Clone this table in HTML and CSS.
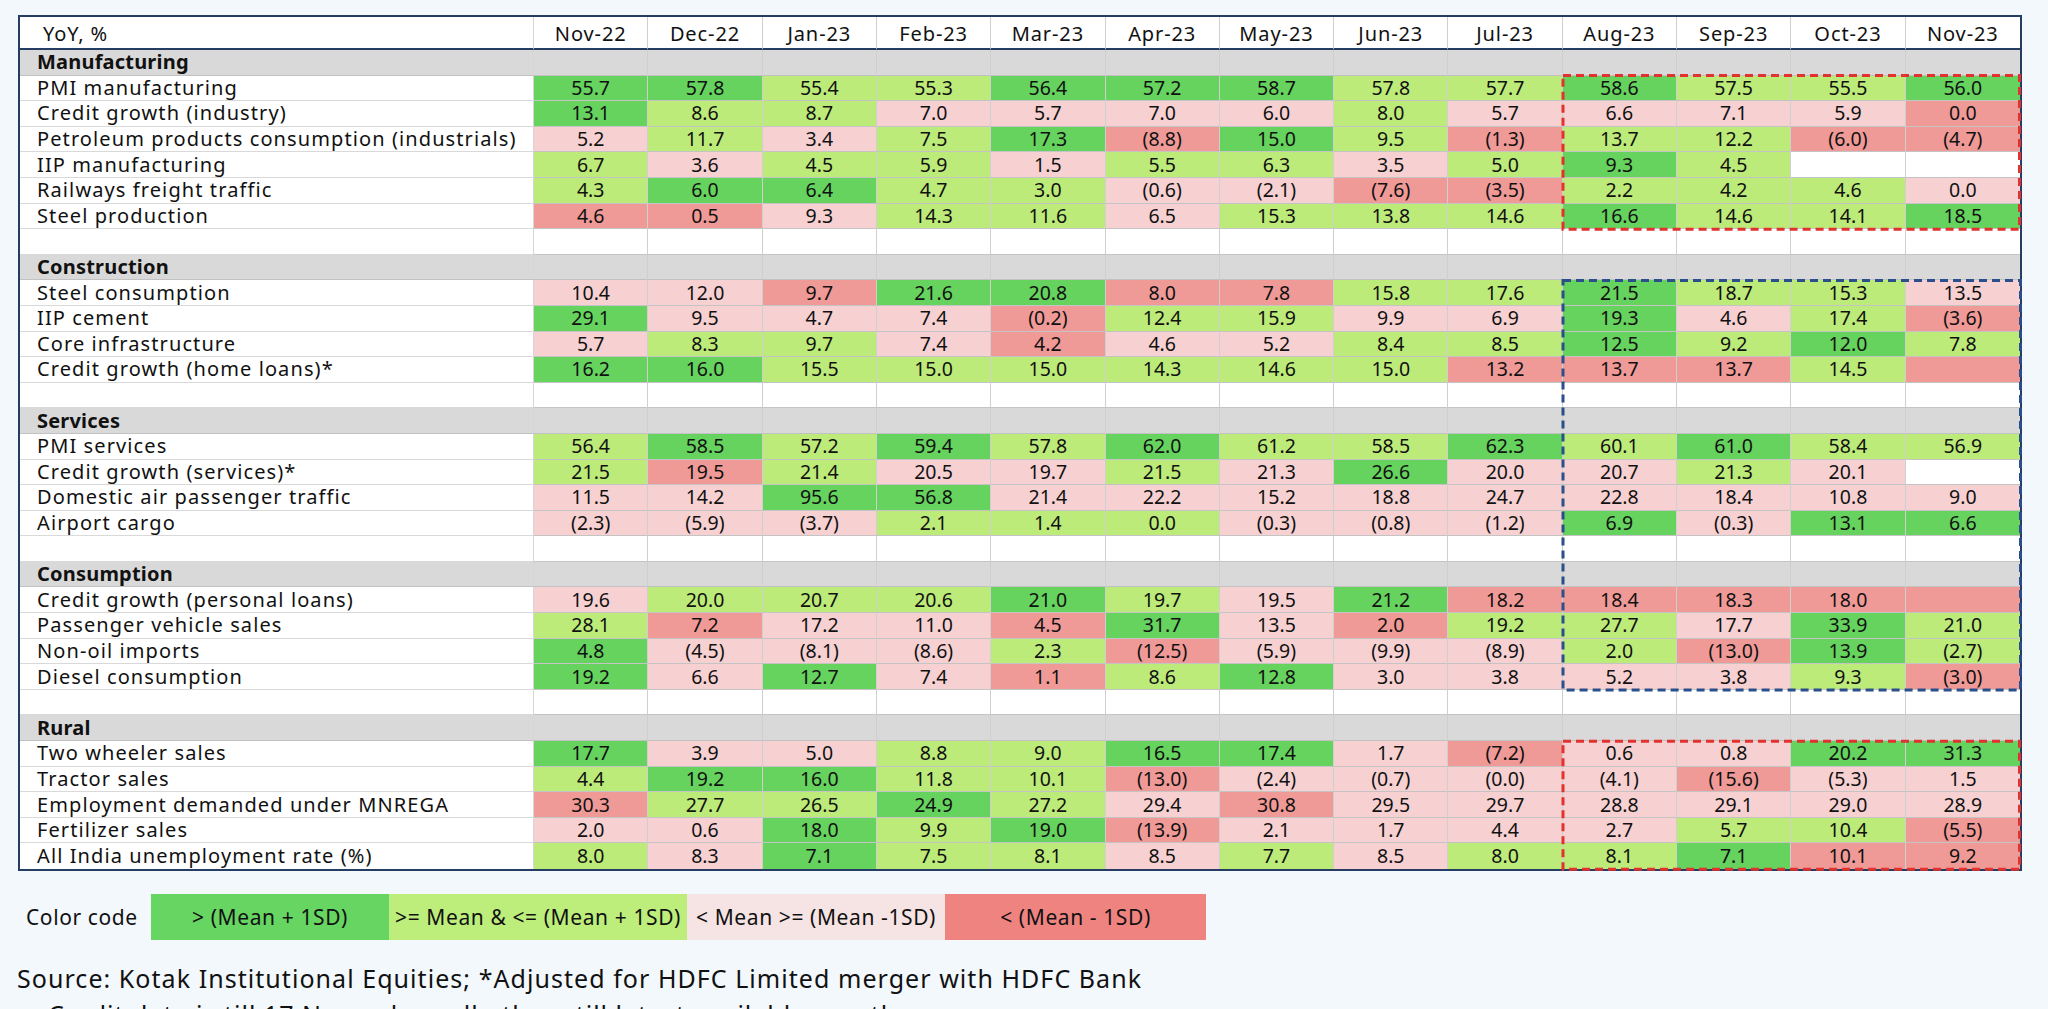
FILE: index.html
```html
<!DOCTYPE html>
<html>
<head>
<meta charset="utf-8">
<title>YoY indicators</title>
<link rel="stylesheet" href="styles.css">
</head>
<body>
<div class="wrap">
<table class="grid">
<colgroup><col class="c-label"><col span="13" class="c-num"></colgroup>
<thead>
<tr class="head"><th class="lab">YoY, %</th><th>Nov-22</th><th>Dec-22</th><th>Jan-23</th><th>Feb-23</th><th>Mar-23</th><th>Apr-23</th><th>May-23</th><th>Jun-23</th><th>Jul-23</th><th>Aug-23</th><th>Sep-23</th><th>Oct-23</th><th>Nov-23</th></tr>
</thead>
<tbody>
<tr class="sec"><td class="lab">Manufacturing</td><td></td><td></td><td></td><td></td><td></td><td></td><td></td><td></td><td></td><td></td><td></td><td></td><td></td></tr>
<tr><td class="lab">PMI manufacturing</td><td class="g">55.7</td><td class="g">57.8</td><td class="l">55.4</td><td class="l">55.3</td><td class="g">56.4</td><td class="g">57.2</td><td class="g">58.7</td><td class="l">57.8</td><td class="l">57.7</td><td class="g">58.6</td><td class="l">57.5</td><td class="l">55.5</td><td class="g">56.0</td></tr>
<tr><td class="lab">Credit growth (industry)</td><td class="g">13.1</td><td class="l">8.6</td><td class="l">8.7</td><td class="p">7.0</td><td class="p">5.7</td><td class="p">7.0</td><td class="p">6.0</td><td class="l">8.0</td><td class="p">5.7</td><td class="p">6.6</td><td class="p">7.1</td><td class="p">5.9</td><td class="r">0.0</td></tr>
<tr><td class="lab">Petroleum products consumption (industrials)</td><td class="p">5.2</td><td class="l">11.7</td><td class="p">3.4</td><td class="l">7.5</td><td class="g">17.3</td><td class="r">(8.8)</td><td class="g">15.0</td><td class="l">9.5</td><td class="r">(1.3)</td><td class="l">13.7</td><td class="l">12.2</td><td class="r">(6.0)</td><td class="r">(4.7)</td></tr>
<tr><td class="lab">IIP manufacturing</td><td class="l">6.7</td><td class="p">3.6</td><td class="l">4.5</td><td class="l">5.9</td><td class="p">1.5</td><td class="l">5.5</td><td class="l">6.3</td><td class="p">3.5</td><td class="l">5.0</td><td class="g">9.3</td><td class="l">4.5</td><td></td><td></td></tr>
<tr><td class="lab">Railways freight traffic</td><td class="l">4.3</td><td class="g">6.0</td><td class="g">6.4</td><td class="l">4.7</td><td class="l">3.0</td><td class="p">(0.6)</td><td class="p">(2.1)</td><td class="r">(7.6)</td><td class="r">(3.5)</td><td class="l">2.2</td><td class="l">4.2</td><td class="l">4.6</td><td class="p">0.0</td></tr>
<tr><td class="lab">Steel production</td><td class="r">4.6</td><td class="r">0.5</td><td class="p">9.3</td><td class="l">14.3</td><td class="l">11.6</td><td class="p">6.5</td><td class="l">15.3</td><td class="l">13.8</td><td class="l">14.6</td><td class="g">16.6</td><td class="l">14.6</td><td class="l">14.1</td><td class="g">18.5</td></tr>
<tr class="blank"><td class="lab"></td><td></td><td></td><td></td><td></td><td></td><td></td><td></td><td></td><td></td><td></td><td></td><td></td><td></td></tr>

<tr class="sec"><td class="lab">Construction</td><td></td><td></td><td></td><td></td><td></td><td></td><td></td><td></td><td></td><td></td><td></td><td></td><td></td></tr>
<tr><td class="lab">Steel consumption</td><td class="p">10.4</td><td class="p">12.0</td><td class="r">9.7</td><td class="g">21.6</td><td class="g">20.8</td><td class="r">8.0</td><td class="r">7.8</td><td class="l">15.8</td><td class="l">17.6</td><td class="g">21.5</td><td class="l">18.7</td><td class="l">15.3</td><td class="p">13.5</td></tr>
<tr><td class="lab">IIP cement</td><td class="g">29.1</td><td class="p">9.5</td><td class="p">4.7</td><td class="p">7.4</td><td class="r">(0.2)</td><td class="l">12.4</td><td class="l">15.9</td><td class="p">9.9</td><td class="p">6.9</td><td class="g">19.3</td><td class="p">4.6</td><td class="l">17.4</td><td class="r">(3.6)</td></tr>
<tr><td class="lab">Core infrastructure</td><td class="p">5.7</td><td class="l">8.3</td><td class="l">9.7</td><td class="p">7.4</td><td class="r">4.2</td><td class="p">4.6</td><td class="p">5.2</td><td class="l">8.4</td><td class="l">8.5</td><td class="g">12.5</td><td class="l">9.2</td><td class="g">12.0</td><td class="l">7.8</td></tr>
<tr><td class="lab">Credit growth (home loans)*</td><td class="g">16.2</td><td class="g">16.0</td><td class="l">15.5</td><td class="l">15.0</td><td class="l">15.0</td><td class="l">14.3</td><td class="l">14.6</td><td class="l">15.0</td><td class="r">13.2</td><td class="r">13.7</td><td class="r">13.7</td><td class="l">14.5</td><td class="r"></td></tr>
<tr class="blank"><td class="lab"></td><td></td><td></td><td></td><td></td><td></td><td></td><td></td><td></td><td></td><td></td><td></td><td></td><td></td></tr>

<tr class="sec"><td class="lab">Services</td><td></td><td></td><td></td><td></td><td></td><td></td><td></td><td></td><td></td><td></td><td></td><td></td><td></td></tr>
<tr><td class="lab">PMI services</td><td class="l">56.4</td><td class="g">58.5</td><td class="l">57.2</td><td class="g">59.4</td><td class="l">57.8</td><td class="g">62.0</td><td class="l">61.2</td><td class="l">58.5</td><td class="g">62.3</td><td class="l">60.1</td><td class="g">61.0</td><td class="l">58.4</td><td class="l">56.9</td></tr>
<tr><td class="lab">Credit growth (services)*</td><td class="l">21.5</td><td class="r">19.5</td><td class="l">21.4</td><td class="p">20.5</td><td class="p">19.7</td><td class="l">21.5</td><td class="p">21.3</td><td class="g">26.6</td><td class="p">20.0</td><td class="p">20.7</td><td class="l">21.3</td><td class="p">20.1</td><td></td></tr>
<tr><td class="lab">Domestic air passenger traffic</td><td class="p">11.5</td><td class="p">14.2</td><td class="g">95.6</td><td class="g">56.8</td><td class="p">21.4</td><td class="p">22.2</td><td class="p">15.2</td><td class="p">18.8</td><td class="p">24.7</td><td class="p">22.8</td><td class="p">18.4</td><td class="p">10.8</td><td class="p">9.0</td></tr>
<tr><td class="lab">Airport cargo</td><td class="p">(2.3)</td><td class="p">(5.9)</td><td class="p">(3.7)</td><td class="l">2.1</td><td class="l">1.4</td><td class="l">0.0</td><td class="p">(0.3)</td><td class="p">(0.8)</td><td class="p">(1.2)</td><td class="g">6.9</td><td class="p">(0.3)</td><td class="g">13.1</td><td class="g">6.6</td></tr>
<tr class="blank"><td class="lab"></td><td></td><td></td><td></td><td></td><td></td><td></td><td></td><td></td><td></td><td></td><td></td><td></td><td></td></tr>

<tr class="sec"><td class="lab">Consumption</td><td></td><td></td><td></td><td></td><td></td><td></td><td></td><td></td><td></td><td></td><td></td><td></td><td></td></tr>
<tr><td class="lab">Credit growth (personal loans)</td><td class="p">19.6</td><td class="l">20.0</td><td class="l">20.7</td><td class="l">20.6</td><td class="g">21.0</td><td class="l">19.7</td><td class="p">19.5</td><td class="g">21.2</td><td class="r">18.2</td><td class="r">18.4</td><td class="r">18.3</td><td class="r">18.0</td><td class="r"></td></tr>
<tr><td class="lab">Passenger vehicle sales</td><td class="l">28.1</td><td class="r">7.2</td><td class="p">17.2</td><td class="p">11.0</td><td class="r">4.5</td><td class="g">31.7</td><td class="p">13.5</td><td class="r">2.0</td><td class="l">19.2</td><td class="l">27.7</td><td class="p">17.7</td><td class="g">33.9</td><td class="l">21.0</td></tr>
<tr><td class="lab">Non-oil imports</td><td class="g">4.8</td><td class="p">(4.5)</td><td class="p">(8.1)</td><td class="p">(8.6)</td><td class="l">2.3</td><td class="r">(12.5)</td><td class="p">(5.9)</td><td class="p">(9.9)</td><td class="p">(8.9)</td><td class="l">2.0</td><td class="r">(13.0)</td><td class="g">13.9</td><td class="l">(2.7)</td></tr>
<tr><td class="lab">Diesel consumption</td><td class="g">19.2</td><td class="p">6.6</td><td class="g">12.7</td><td class="p">7.4</td><td class="r">1.1</td><td class="l">8.6</td><td class="g">12.8</td><td class="p">3.0</td><td class="p">3.8</td><td class="p">5.2</td><td class="p">3.8</td><td class="l">9.3</td><td class="r">(3.0)</td></tr>
<tr class="blank"><td class="lab"></td><td></td><td></td><td></td><td></td><td></td><td></td><td></td><td></td><td></td><td></td><td></td><td></td><td></td></tr>

<tr class="sec"><td class="lab">Rural</td><td></td><td></td><td></td><td></td><td></td><td></td><td></td><td></td><td></td><td></td><td></td><td></td><td></td></tr>
<tr><td class="lab">Two wheeler sales</td><td class="g">17.7</td><td class="p">3.9</td><td class="p">5.0</td><td class="l">8.8</td><td class="l">9.0</td><td class="g">16.5</td><td class="g">17.4</td><td class="p">1.7</td><td class="r">(7.2)</td><td class="p">0.6</td><td class="p">0.8</td><td class="g">20.2</td><td class="g">31.3</td></tr>
<tr><td class="lab">Tractor sales</td><td class="l">4.4</td><td class="g">19.2</td><td class="g">16.0</td><td class="l">11.8</td><td class="l">10.1</td><td class="r">(13.0)</td><td class="p">(2.4)</td><td class="p">(0.7)</td><td class="p">(0.0)</td><td class="p">(4.1)</td><td class="r">(15.6)</td><td class="p">(5.3)</td><td class="p">1.5</td></tr>
<tr><td class="lab">Employment demanded under MNREGA</td><td class="r">30.3</td><td class="l">27.7</td><td class="l">26.5</td><td class="g">24.9</td><td class="l">27.2</td><td class="p">29.4</td><td class="r">30.8</td><td class="p">29.5</td><td class="p">29.7</td><td class="p">28.8</td><td class="p">29.1</td><td class="p">29.0</td><td class="p">28.9</td></tr>
<tr><td class="lab">Fertilizer sales</td><td class="p">2.0</td><td class="p">0.6</td><td class="g">18.0</td><td class="l">9.9</td><td class="g">19.0</td><td class="r">(13.9)</td><td class="p">2.1</td><td class="p">1.7</td><td class="p">4.4</td><td class="p">2.7</td><td class="l">5.7</td><td class="l">10.4</td><td class="r">(5.5)</td></tr>
<tr class="last"><td class="lab">All India unemployment rate (%)</td><td class="l">8.0</td><td class="p">8.3</td><td class="g">7.1</td><td class="l">7.5</td><td class="l">8.1</td><td class="p">8.5</td><td class="l">7.7</td><td class="p">8.5</td><td class="l">8.0</td><td class="l">8.1</td><td class="g">7.1</td><td class="r">10.1</td><td class="r">9.2</td></tr>
</tbody>
</table>
<svg class="marks" width="2004" height="860" viewBox="0 0 2004 860">
<rect class="mk-red" x="1545" y="60.6" width="456.5" height="153.6"/>
<rect class="mk-blue" x="1545" y="265.4" width="457.5" height="409.6"/>
<rect class="mk-red" x="1545" y="726.2" width="456.5" height="128"/>
</svg>
</div>

<div class="legend">
<div class="legend-title">Color code</div>
<div class="key kg">&gt; (Mean + 1SD)</div>
<div class="key kl">&gt;= Mean &amp; &lt;= (Mean + 1SD)</div>
<div class="key kp">&lt; Mean &gt;= (Mean -1SD)</div>
<div class="key kr">&lt; (Mean - 1SD)</div>
</div>

<p class="source">Source: Kotak Institutional Equities; *Adjusted for HDFC Limited merger with HDFC Bank</p>
<p class="note">Credit data is till 17 November; all others till latest available month</p>
</body>
</html>
```
FILE: styles.css
```css
* { box-sizing: border-box; }
html, body { margin: 0; }
body {
  background: #f3f8fd;
  font-family: "Noto Sans", "Open Sans", sans-serif;
  color: #111;
  padding: 15px 0 0 18px;
  height: 1009px;
  overflow: hidden;
}
.wrap { position: relative; width: 2004px; }
.grid {
  border-collapse: separate;
  border-spacing: 0;
  table-layout: fixed;
  width: 2004px;
  border: 2px solid #263d63;
  background: #fff;
}
.c-label { width: 514px; }
.c-num { width: 114.31px; }
.grid th, .grid td {
  padding: 0;
  border-right: 1px solid #cfcfcf;
  border-bottom: 1px solid #c4c4c4;
  text-align: center;
  font-weight: normal;
  white-space: nowrap;
  font-size: 19.5px;
  line-height: 24px;
}
.grid th:last-child, .grid td:last-child { border-right: 0; }
.grid tr.last td { border-bottom: 0; }
.grid tbody tr { height: 25.6px; }
.grid .head { height: 33px; }
.grid .head th {
  border-bottom: 2px solid #263d63;
  font-size: 20px;
  letter-spacing: 0.9px;
  padding-top: 2px;
}
.grid .lab {
  text-align: left;
  padding-left: 17px;
  font-size: 20px;
  letter-spacing: 1.1px;
  border-right-color: #d6d6d6;
  border-bottom-color: #d9d9d9;
}
.grid .head .lab { padding-left: 23px; }
.grid .sec td { background: #d9d9d9; border-bottom-color: #c2c2c2; }
.grid .sec .lab { font-weight: 700; letter-spacing: 0.2px; }
.g { background: #65d35e; }
.l { background: #bdeb79; }
.p { background: #f7d1d1; }
.r { background: #f09a97; }

.marks {
  position: absolute;
  left: 0;
  top: 0;
  overflow: visible;
  pointer-events: none;
}
.marks rect { fill: none; stroke-width: 3; stroke-dasharray: 8 5; }
.mk-red { stroke: #e1322f; }
.mk-blue { stroke: #2a4f8c; }

.legend {
  display: flex;
  align-items: stretch;
  height: 46px;
  margin-top: 23px;
  font-size: 21px;
  letter-spacing: 0.6px;
}
.legend-title {
  width: 133px;
  padding-left: 8px;
  display: flex;
  align-items: center;
}
.key { display: flex; align-items: center; justify-content: center; }
.kg { width: 238px; background: #66d562; }
.kl { width: 298px; background: #bdee7b; }
.kp { width: 258px; background: #f6e3e3; }
.kr { width: 261px; background: #ef8380; }

.source {
  margin: 21px 0 0 -1px;
  font-size: 25px;
  line-height: 34px;
  letter-spacing: 1.05px;
}
.note {
  margin: 2px 0 0 30px;
  font-size: 25px;
  line-height: 34px;
  letter-spacing: 1px;
}
```
